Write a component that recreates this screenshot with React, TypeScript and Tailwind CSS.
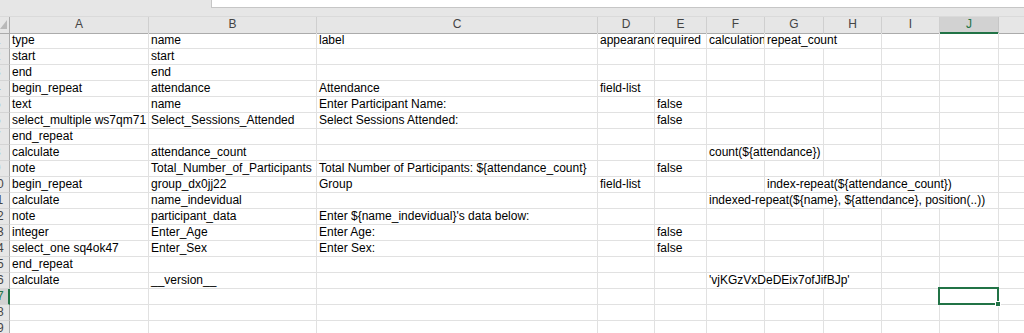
import React from "react";

const GRID =
  "grid grid-cols-[10px_139px_168px_281px_57px_52px_58px_59px_58px_58px_59px_59px]";

const LETTERS = ["A", "B", "C", "D", "E", "F", "G", "H", "I", "J", "K"];

const SPAN: Record<number, string> = {
  1: "",
  2: "col-span-2",
  3: "col-span-3",
  4: "col-span-4",
  5: "col-span-5",
};

// [col index, text, span]
type Cell = [number, string, number?];

const rows: Cell[][] = [
  [[0, "type"], [1, "name"], [2, "label"], [3, "appearance"], [4, "required"], [5, "calculation"], [6, "repeat_count", 2]],
  [[0, "start"], [1, "start"]],
  [[0, "end"], [1, "end"]],
  [[0, "begin_repeat"], [1, "attendance"], [2, "Attendance"], [3, "field-list"]],
  [[0, "text"], [1, "name"], [2, "Enter Participant Name:"], [4, "false"]],
  [[0, "select_multiple ws7qm71"], [1, "Select_Sessions_Attended"], [2, "Select Sessions Attended:"], [4, "false"]],
  [[0, "end_repeat"]],
  [[0, "calculate"], [1, "attendance_count"], [5, "count(${attendance})", 2]],
  [[0, "note"], [1, "Total_Number_of_Participants"], [2, "Total Number of Participants: ${attendance_count}"], [4, "false"]],
  [[0, "begin_repeat"], [1, "group_dx0jj22"], [2, "Group"], [3, "field-list"], [6, "index-repeat(${attendance_count})", 4]],
  [[0, "calculate"], [1, "name_indevidual"], [5, "indexed-repeat(${name}, ${attendance}, position(..))", 5]],
  [[0, "note"], [1, "participant_data"], [2, "Enter ${name_indevidual}'s data below:"]],
  [[0, "integer"], [1, "Enter_Age"], [2, "Enter Age:"], [4, "false"]],
  [[0, "select_one sq4ok47"], [1, "Enter_Sex"], [2, "Enter Sex:"], [4, "false"]],
  [[0, "end_repeat"]],
  [[0, "calculate"], [1, "__version__"], [5, "'vjKGzVxDeDEix7ofJifBJp'", 3]],
  [],
  [],
  [],
];

const ACTIVE_ROW = 17;
const ACTIVE_COL = 9;

function RowCells({ cells, rowNum }: { cells: Cell[]; rowNum: number }) {
  const out: React.ReactNode[] = [];
  let c = 0;
  while (c < LETTERS.length) {
    const hit = cells.find((x) => x[0] === c);
    const span = hit ? hit[2] ?? 1 : 1;
    const active = rowNum === ACTIVE_ROW && c === ACTIVE_COL;
    out.push(
      <div
        key={c}
        className={`relative h-4 border-r border-b border-[#e1e1e1] pl-[2px] leading-[15px] whitespace-nowrap ${SPAN[span]} ${active ? "overflow-visible" : "overflow-hidden"}`}
      >
        {hit ? hit[1] : ""}
        {active && (
          <div className="absolute -left-[2px] -top-[2px] z-10 h-[18px] w-[61px] border-2 border-[#217346]">
            <div className="absolute -right-[4px] -bottom-[4px] h-[6px] w-[6px] border border-white bg-[#217346]" />
          </div>
        )}
      </div>
    );
    c += span;
  }
  return <>{out}</>;
}

export default function App() {
  return (
    <div className="h-[333px] w-[1024px] overflow-hidden bg-white font-['Liberation_Sans',Arial,sans-serif] text-[12px] text-black">
      {/* formula bar strip */}
      <div className="flex h-[17px] bg-[#e6e6e6] border-b border-[#dadada]">
        <div className="w-[211px]" />
        <div className="h-[8px] flex-1 border-l border-b border-[#c6c6c6] bg-white" />
      </div>

      {/* column headers */}
      <div className={`${GRID} h-[16px] bg-[#e6e6e6]`}>
        <div className="relative border-r border-b border-[#ababab]">
          <svg className="absolute left-0 top-[3px]" width="8" height="10" viewBox="0 0 8 10">
            <polygon points="7,0 7,9 0,9" fill="#b9b9b9" />
          </svg>
        </div>
        {LETTERS.map((l, i) =>
          i === ACTIVE_COL ? (
            <div
              key={l}
              className="border-r border-[#c6c6c6] border-b-2 border-b-[#217346] bg-[#d2d2d2] text-center leading-[15px] text-[#217346]"
            >
              {l}
            </div>
          ) : (
            <div
              key={l}
              className="border-r border-[#cfcfcf] border-b border-b-[#ababab] text-center leading-[15px] text-[#444]"
            >
              {l}
            </div>
          )
        )}
      </div>

      {/* data rows */}
      {rows.map((cells, i) => {
        const n = i + 1;
        const active = n === ACTIVE_ROW;
        return (
          <div key={n} className={GRID}>
            <div
              className={`h-4 overflow-hidden border-b border-[#d4d4d4] leading-[15px] ${
                active
                  ? "border-r-2 border-r-[#217346] bg-[#d2d2d2] text-[#217346]"
                  : "border-r border-r-[#ababab] bg-[#e6e6e6] text-[#444]"
              }`}
            >
              <div className="-ml-[17px] w-[28px] text-center">{n}</div>
            </div>
            <RowCells cells={cells} rowNum={n} />
          </div>
        );
      })}
    </div>
  );
}
